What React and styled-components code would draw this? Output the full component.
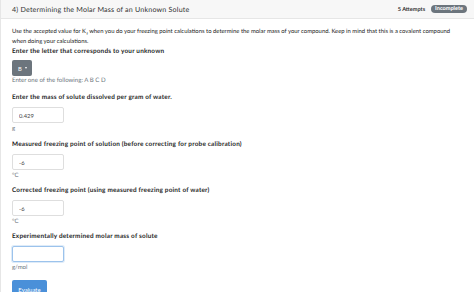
import React from 'react';
import styled, { createGlobalStyle } from 'styled-components';

const GlobalStyle = createGlobalStyle`
  html, body {
    margin: 0;
    padding: 0;
    background: #fff;
  }
  body {
    font-family: Lato, "Noto Sans", sans-serif;
    color: #212529;
    text-rendering: geometricPrecision;
  }
`;

const Card = styled.div`
  width: 474px;
  height: 292px;
  overflow: hidden;
  border-left: 1px solid #e6e6e6;
  box-sizing: border-box;
`;

const Header = styled.div`
  display: flex;
  align-items: center;
  justify-content: space-between;
  height: 18px;
  padding: 0 7px 0 11px;
  background: #f7f7f7;
  border-bottom: 1px solid #e6e6e6;
`;

const Title = styled.div`
  font-size: 7.1px;
  letter-spacing: 0.2px;
  color: #333;
`;

const Status = styled.div`
  display: flex;
  align-items: center;
  gap: 6px;
`;

const Attempts = styled.span`
  font-weight: 700;
  font-size: 5.6px;
  color: #333;
`;

const Badge = styled.span`
  background: #6c757d;
  color: #fff;
  font-size: 5.6px;
  font-weight: 700;
  line-height: 8px;
  padding: 0 4px;
  border-radius: 5px;
`;

const Body = styled.div`
  padding: 8px 11px 0;
  font-size: 5.9px;
  line-height: 10px;
`;

const Intro = styled.p`
  margin: 0;
  color: #222;
`;

const Sub = styled.span`
  display: inline-block;
  margin-left: 0.4px;
  font-size: 4px;
  line-height: 4px;
  vertical-align: -1.5px;
`;

const Label = styled.div`
  font-weight: 700;
  font-size: 6.4px;
  color: #1e1e1e;
  letter-spacing: 0.2px;
  margin-top: ${(p) => p.$top || 0}px;
`;

const Dropdown = styled.button`
  display: flex;
  align-items: center;
  gap: 3px;
  margin-top: 3px;
  height: 16px;
  width: 20px;
  padding: 0 0 0 6px;
  border: none;
  border-radius: 2px;
  background: #6c757d;
  color: #fff;
  font-family: inherit;
  font-size: 5.8px;
`;

const Caret = styled.span`
  width: 0;
  height: 0;
  border-left: 1.5px solid transparent;
  border-right: 1.5px solid transparent;
  border-top: 2px solid #fff;
`;

const Hint = styled.div`
  font-size: 6.1px;
  color: #6c757d;
`;

const Input = styled.input`
  display: block;
  box-sizing: border-box;
  width: 52px;
  height: 16px;
  margin-top: 4px;
  padding: 0 6px;
  border: 1px solid ${(p) => (p.$focus ? '#9cc3ec' : '#dedede')};
  border-radius: 2px;
  box-shadow: ${(p) => (p.$focus ? '0 0 0 1px rgba(74,144,217,0.18)' : 'none')};
  font-family: inherit;
  font-size: 5.8px;
  color: #444;
  outline: none;
`;

const Unit = styled.div`
  font-size: 6px;
  color: #6c757d;
  margin-top: 1px;
`;

const Button = styled.button`
  display: block;
  margin-top: 7px;
  height: 18px;
  width: 35px;
  padding: 0;
  border: none;
  border-radius: 2px;
  background: #4a90d9;
  color: #fff;
  font-family: inherit;
  font-size: 6px;
`;

export default function App() {
  return (
    <>
      <GlobalStyle />
      <Card>
        <Header>
          <Title>4) Determining the Molar Mass of an Unknown Solute</Title>
          <Status>
            <Attempts>5 Attempts</Attempts>
            <Badge>Incomplete</Badge>
          </Status>
        </Header>
        <Body>
          <Intro>
            Use the accepted value for K<Sub>f</Sub> when you do your freezing point calculations to determine the
            molar mass of your compound. Keep in mind that this is a covalent compound when doing your calculations.
          </Intro>
          <Label>Enter the letter that corresponds to your unknown</Label>
          <Dropdown>
            B<Caret />
          </Dropdown>
          <Hint>Enter one of the following: A B C D</Hint>
          <Label $top={7}>Enter the mass of solute dissolved per gram of water.</Label>
          <Input defaultValue="0.429" />
          <Unit>g</Unit>
          <Label $top={6}>Measured freezing point of solution (before correcting for probe calibration)</Label>
          <Input defaultValue="-6" />
          <Unit>°C</Unit>
          <Label $top={5}>Corrected freezing point (using measured freezing point of water)</Label>
          <Input defaultValue="-6" />
          <Unit>°C</Unit>
          <Label $top={5}>Experimentally determined molar mass of solute</Label>
          <Input $focus defaultValue="" />
          <Unit>g/mol</Unit>
          <Button>Evaluate</Button>
        </Body>
      </Card>
    </>
  );
}
